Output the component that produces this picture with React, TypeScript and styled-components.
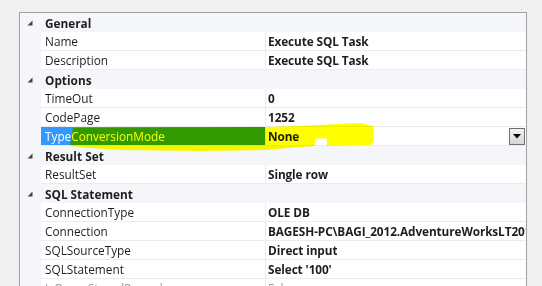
import React from 'react';
import styled, { createGlobalStyle } from 'styled-components';

interface Item {
  name: string;
  value: string;
  selected?: boolean;
  dropdown?: boolean;
  disabled?: boolean;
}

interface Category {
  title: string;
  items: Item[];
}

const categories: Category[] = [
  {
    title: 'General',
    items: [
      { name: 'Name', value: 'Execute SQL Task' },
      { name: 'Description', value: 'Execute SQL Task' },
    ],
  },
  {
    title: 'Options',
    items: [
      { name: 'TimeOut', value: '0' },
      { name: 'CodePage', value: '1252' },
      { name: 'TypeConversionMode', value: 'None', selected: true, dropdown: true },
    ],
  },
  {
    title: 'Result Set',
    items: [{ name: 'ResultSet', value: 'Single row' }],
  },
  {
    title: 'SQL Statement',
    items: [
      { name: 'ConnectionType', value: 'OLE DB' },
      { name: 'Connection', value: 'BAGESH-PC\\BAGI_2012.AdventureWorksLT2012' },
      { name: 'SQLSourceType', value: 'Direct input' },
      { name: 'SQLStatement', value: "Select '100'" },
      { name: 'IsQueryStoredProcedure', value: 'False', disabled: true },
      { name: 'BypassPrepare', value: 'True' },
    ],
  },
];

const GlobalStyle = createGlobalStyle`
  html, body {
    margin: 0;
    padding: 0;
    background: #f0f0f0;
    overflow: hidden;
  }
  body {
    font-family: "Segoe UI", "Open Sans", "Noto Sans", sans-serif;
    font-size: 11.8px;
    color: #1e1e1e;
  }
`;

const Page = styled.div`
  position: relative;
  width: 542px;
  height: 286px;
  padding: 12px 0 0 19px;
  box-sizing: border-box;
  overflow: hidden;
`;

const Grid = styled.div`
  width: 508px;
  height: 320px;
  box-sizing: border-box;
  border: 1px solid #a0a0a0;
  border-bottom: none;
  background: #f4f6fa;
  display: flex;
  flex-direction: column;
`;

const CategoryRow = styled.div`
  display: flex;
  align-items: center;
  height: 19px;
  flex-shrink: 0;
  font-weight: 700;
  color: #1e1e1e;
`;

const Expander = styled.span`
  display: flex;
  align-items: center;
  width: 21px;
  padding-left: 7px;
  box-sizing: border-box;
`;

const CategoryTitle = styled.span`
  padding-left: 4px;
`;

const ItemRow = styled.div`
  display: flex;
  height: 19px;
  flex-shrink: 0;
`;

const Gutter = styled.div`
  width: 21px;
  flex-shrink: 0;
`;

const NameCell = styled.div<{ $selected?: boolean; $disabled?: boolean }>`
  width: 225px;
  flex-shrink: 0;
  box-sizing: border-box;
  padding-left: 4px;
  display: flex;
  align-items: center;
  white-space: nowrap;
  overflow: hidden;
  border-right: 1px solid #ececec;
  border-bottom: 1px solid #ececec;
  background: ${p => (p.$selected ? '#3399ff' : '#ffffff')};
  color: ${p => (p.$selected ? '#ffffff' : p.$disabled ? '#9a9a9a' : '#1e1e1e')};
`;

const ValueCell = styled.div<{ $disabled?: boolean }>`
  flex: 1;
  min-width: 0;
  box-sizing: border-box;
  padding-left: 2px;
  display: flex;
  align-items: center;
  justify-content: space-between;
  white-space: nowrap;
  overflow: hidden;
  background: #ffffff;
  border-bottom: 1px solid #ececec;
  font-weight: ${p => (p.$disabled ? 400 : 700)};
  letter-spacing: -0.1px;
  color: ${p => (p.$disabled ? '#9a9a9a' : '#1e1e1e')};
`;

const ValueText = styled.span`
  overflow: hidden;
`;

const DropButton = styled.div`
  width: 16px;
  height: 17px;
  margin-right: 1px;
  flex-shrink: 0;
  box-sizing: border-box;
  border: 1px solid #707070;
  background: linear-gradient(#f2f2f2, #d6d6d6);
  display: flex;
  align-items: center;
  justify-content: center;
`;

const Highlighter = styled.svg`
  position: absolute;
  left: 0;
  top: 0;
  pointer-events: none;
  mix-blend-mode: multiply;
`;

const ExpandedGlyph = () => (
  <svg width="6" height="6" viewBox="0 0 6 6">
    <polygon points="5.5,0.5 5.5,5.5 0.5,5.5" fill="#444" />
  </svg>
);

const App: React.FC = () => {
  return (
    <>
      <GlobalStyle />
      <Page>
        <Grid>
          {categories.map(cat => (
            <React.Fragment key={cat.title}>
              <CategoryRow>
                <Expander>
                  <ExpandedGlyph />
                </Expander>
                <CategoryTitle>{cat.title}</CategoryTitle>
              </CategoryRow>
              {cat.items.map(item => (
                <ItemRow key={item.name}>
                  <Gutter />
                  <NameCell $selected={item.selected} $disabled={item.disabled}>
                    {item.name}
                  </NameCell>
                  <ValueCell $disabled={item.disabled}>
                    <ValueText>{item.value}</ValueText>
                    {item.dropdown && (
                      <DropButton>
                        <svg width="8" height="5" viewBox="0 0 8 5">
                          <polygon points="0,0 8,0 4,4.5" fill="#000" />
                        </svg>
                      </DropButton>
                    )}
                  </ValueCell>
                </ItemRow>
              ))}
            </React.Fragment>
          ))}
        </Grid>
        {/* hand-drawn marker over the selected row */}
        <Highlighter width="542" height="286" viewBox="0 0 542 286">
          <path
            d="M73 128 L265 127 L300 126 L337 124 L360 123 L373 126 L374 140 L371 145 L330 145.5 L327 146 L327 138.5 L315 138.5 L315 146 L300 147 L265 150 L200 151 L120 150 L90 148 L70 146 Z"
            fill="#ffff00"
          />
        </Highlighter>
      </Page>
    </>
  );
};

export default App;
